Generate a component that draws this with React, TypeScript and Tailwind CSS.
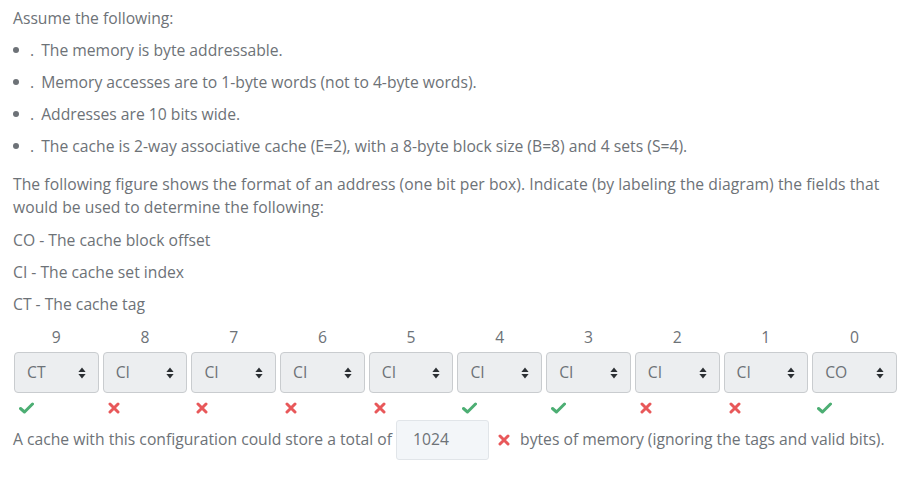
import React from "react";

const bits = [
  { n: 9, v: "CT", ok: true },
  { n: 8, v: "CI", ok: false },
  { n: 7, v: "CI", ok: false },
  { n: 6, v: "CI", ok: false },
  { n: 5, v: "CI", ok: false },
  { n: 4, v: "CI", ok: true },
  { n: 3, v: "CI", ok: true },
  { n: 2, v: "CI", ok: false },
  { n: 1, v: "CI", ok: false },
  { n: 0, v: "CO", ok: true },
];

const bullets = [
  "The memory is byte addressable.",
  "Memory accesses are to 1-byte words (not to 4-byte words).",
  "Addresses are 10 bits wide.",
  "The cache is 2-way associative cache (E=2), with a 8-byte block size (B=8) and 4 sets (S=4).",
];

function SortIcon() {
  return (
    <svg width="8" height="12" viewBox="0 0 8 12" className="shrink-0">
      <path d="M4 0.5 L7.6 5 L0.4 5 Z" fill="#2b2f33" />
      <path d="M4 11.5 L7.6 7 L0.4 7 Z" fill="#2b2f33" />
    </svg>
  );
}

function Check() {
  return (
    <svg width="15" height="12" viewBox="0 0 15 12">
      <path d="M1.5 6.5 L5.5 10 L13.5 2" fill="none" stroke="#4cae73" strokeWidth="3" strokeLinecap="round" strokeLinejoin="round" />
    </svg>
  );
}

function Cross() {
  return (
    <svg width="12" height="12" viewBox="0 0 12 12">
      <path d="M2 2 L10 10 M10 2 L2 10" fill="none" stroke="#e8585a" strokeWidth="3" strokeLinecap="round" />
    </svg>
  );
}

export default function App() {
  return (
    <div
      className="w-[909px] h-[479px] bg-white text-[15.7px] text-[#6d7277] pt-[7px] pl-[13px]"
      style={{ fontFamily: '"Open Sans", sans-serif' }}
    >
      <p className="leading-[22px] mb-[10px]">Assume the following:</p>
      <ul className="mb-[16px]">
        {bullets.map((b) => (
          <li key={b} className="flex items-center leading-[22px] mb-[10px] last:mb-0">
            <span className="w-[6px] h-[6px] rounded-full bg-[#6d7277] mr-[11px]" />
            <span className="mr-[7px]">.</span>
            <span>{b}</span>
          </li>
        ))}
      </ul>
      <p className="leading-[23px] w-[890px] tracking-[0.05px] mb-[10px]">
        The following figure shows the format of an address (one bit per box). Indicate (by labeling the diagram) the fields that would be used to determine the following:
      </p>
      <p className="leading-[22px] mb-[10px]">CO - The cache block offset</p>
      <p className="leading-[22px] mb-[10px]">CI - The cache set index</p>
      <p className="leading-[22px] mb-[12px]">CT - The cache tag</p>

      <div className="flex gap-[4px] ml-[1px]">
        {bits.map((b) => (
          <div key={b.n} className="w-[84.7px] flex flex-col">
            <div className="leading-[20px] text-center mb-[5px]">{b.n}</div>
            <div className="h-[41px] rounded-[4px] border border-[#c9cccf] bg-[#eceef0] flex items-center justify-between pl-[12px] pr-[12px]">
              <span>{b.v}</span>
              <SortIcon />
            </div>
            <div className="h-[14px] mt-[8px] pl-[5px] flex items-center">
              {b.ok ? <Check /> : <Cross />}
            </div>
          </div>
        ))}
      </div>

      <div className="flex items-center mt-[5px]">
        <span>A cache with this configuration could store a total of</span>
        <div className="ml-[4px] w-[93px] h-[40px] rounded-[3px] border border-[#e1e5e9] bg-[#f3f6f9] flex items-center pl-[16px]">
          1024
        </div>
        <span className="ml-[9px] mr-[10px] flex items-center">
          <Cross />
        </span>
        <span>bytes of memory (ignoring the tags and valid bits).</span>
      </div>
    </div>
  );
}
